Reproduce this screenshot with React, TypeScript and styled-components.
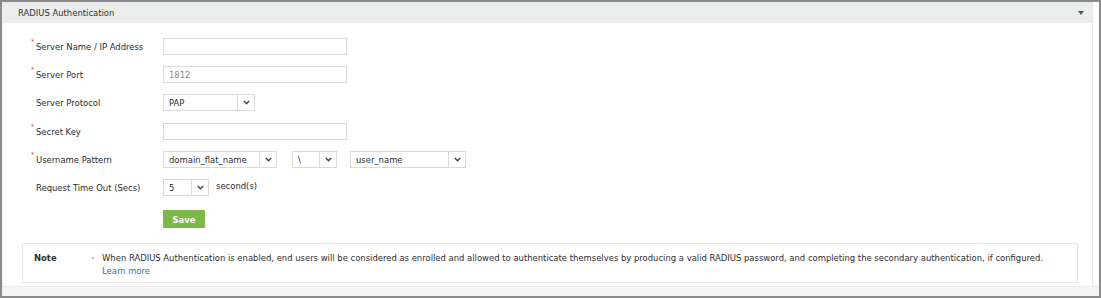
import React from 'react'
import styled, { createGlobalStyle } from 'styled-components'

const GlobalStyle = createGlobalStyle`
    html, body {
        margin: 0;
        padding: 0;
        background: #ffffff;
    }
    body {
        font-family: "DejaVu Sans Condensed", "DejaVu Sans", sans-serif;
        font-size: 9.4px;
        color: #2e2e2e;
    }
`

const fields = [
    { label: 'Server Name / IP Address', required: true, kind: 'text', value: '' },
    { label: 'Server Port', required: true, kind: 'text', value: '1812' },
    { label: 'Server Protocol', required: false, kind: 'protocol', value: 'PAP' },
    { label: 'Secret Key', required: true, kind: 'text', value: '' },
    { label: 'Username Pattern', required: true, kind: 'pattern', value: '' },
    { label: 'Request Time Out (Secs)', required: false, kind: 'timeout', value: '5' },
]

const Chevron = () => (
    <svg width="7" height="5" viewBox="0 0 7 5">
        <path d="M0.8 1 L3.5 3.8 L6.2 1" fill="none" stroke="#444" strokeWidth="1.4" />
    </svg>
)

const Select = ({ value, width }: { value: string; width: number }) => (
    <SelectBox style={{ width }}>
        <span className='value'>{value}</span>
        <span className='arrow'><Chevron /></span>
    </SelectBox>
)

const App = () => {
    return <>
        <GlobalStyle />
        <Frame>
            <Panel>
                <Header>
                    <span>RADIUS Authentication</span>
                    <Caret />
                </Header>
                <Form>
                    {fields.map(f => <Row key={f.label}>
                        <Label>
                            <Star $show={f.required}>*</Star>
                            <span>{f.label}</span>
                        </Label>
                        <Controls>
                            {f.kind === 'text' && <TextInput $muted={f.value !== ''}>{f.value}</TextInput>}
                            {f.kind === 'protocol' && <Select value='PAP' width={92} />}
                            {f.kind === 'pattern' && <>
                                <Select value='domain_flat_name' width={114} />
                                <Spacer $w={15} />
                                <Select value='\' width={45} />
                                <Spacer $w={13} />
                                <Select value='user_name' width={116} />
                            </>}
                            {f.kind === 'timeout' && <>
                                <Select value='5' width={46} />
                                <Unit>second(s)</Unit>
                            </>}
                        </Controls>
                    </Row>)}
                    <SaveRow>
                        <SaveButton>Save</SaveButton>
                    </SaveRow>
                </Form>
                <NoteBox>
                    <NoteTitle>Note</NoteTitle>
                    <Bullet />
                    <NoteText>
                        When RADIUS Authentication is enabled, end users will be considered as enrolled and allowed to authenticate themselves by producing a valid RADIUS password, and completing the secondary authentication, if configured.
                        <br />
                        <a href="#">Learn more</a>
                    </NoteText>
                </NoteBox>
            </Panel>
            <BottomStrip />
        </Frame>
    </>
}

export default App

const Frame = styled.div`
    width: 1101px;
    height: 298px;
    box-sizing: border-box;
    border: 2px solid #8b8b8b;
    background: #ffffff;
    display: flex;
    flex-direction: column;
`

const Panel = styled.div`
    flex: 1;
    margin-right: 6px;
    border-right: 1px solid #e8e8e8;
    border-left: 1px solid #f0f0f0;
    background: #ffffff;
    padding-bottom: 3px;
    display: flex;
    flex-direction: column;
`

const Header = styled.div`
    height: 21px;
    flex-shrink: 0;
    background: #eceeee;
    display: flex;
    align-items: center;
    justify-content: space-between;
    padding: 0 8px 0 15px;
    color: #2e2e2e;
    font-size: 9.4px;
`

const Caret = styled.span`
    width: 0;
    height: 0;
    border-left: 3.5px solid transparent;
    border-right: 3.5px solid transparent;
    border-top: 4px solid #555;
`

const Form = styled.div`
    padding: 15px 0 0 28px;
    display: flex;
    flex-direction: column;
    gap: 11.2px;
`

const Row = styled.div`
    display: grid;
    grid-template-columns: 132px auto;
    align-items: center;
    height: 17px;
`

const Label = styled.div`
    display: flex;
    align-items: flex-start;
    line-height: 11px;
`

const Star = styled.span<{ $show: boolean }>`
    width: 5px;
    color: #e0453a;
    font-size: 7px;
    line-height: 7px;
    margin-top: -2px;
    visibility: ${p => p.$show ? 'visible' : 'hidden'};
`

const Controls = styled.div`
    display: flex;
    align-items: center;
`

const Spacer = styled.span<{ $w: number }>`
    width: ${p => p.$w}px;
`

const TextInput = styled.div<{ $muted: boolean }>`
    width: 184px;
    height: 17px;
    box-sizing: border-box;
    border: 1px solid #dadada;
    background: #fff;
    padding: 0 5px;
    display: flex;
    align-items: center;
    color: ${p => p.$muted ? '#8a8a8a' : '#2e2e2e'};
`

const SelectBox = styled.div`
    height: 17px;
    box-sizing: border-box;
    border: 1px solid #dadada;
    background: #fff;
    display: flex;
    align-items: stretch;
    .value {
        flex: 1;
        display: flex;
        align-items: center;
        padding-left: 5px;
        white-space: nowrap;
        overflow: hidden;
    }
    .arrow {
        width: 16px;
        border-left: 1px solid #dadada;
        display: flex;
        align-items: center;
        justify-content: center;
    }
`

const Unit = styled.span`
    margin-left: 7px;
    margin-top: -3px;
`

const SaveRow = styled.div`
    padding-left: 132px;
    margin-top: 3px;
`

const SaveButton = styled.button`
    width: 42px;
    height: 18px;
    border: none;
    border-radius: 1px;
    background: #7cb84a;
    color: #fff;
    font-family: inherit;
    font-size: 9.4px;
    font-weight: bold;
    padding: 0;
`

const NoteBox = styled.div`
    margin: 15px 14px 0 19px;
    height: 40px;
    box-sizing: border-box;
    border: 1px solid #e9e9e9;
    display: flex;
    align-items: flex-start;
    padding: 7px 0 0 11px;
`

const NoteTitle = styled.span`
    width: 58px;
    font-weight: bold;
    line-height: 13px;
`

const Bullet = styled.span`
    width: 2px;
    height: 2px;
    border-radius: 50%;
    background: #8cc05a;
    margin: 6px 8px 0 0;
    flex-shrink: 0;
`

const NoteText = styled.div`
    line-height: 13px;
    a {
        color: #2a77c0;
        text-decoration: none;
    }
`

const BottomStrip = styled.div`
    height: 9px;
    flex-shrink: 0;
    background: #f4f4f4;
    border-top: 1px solid #ececec;
`
